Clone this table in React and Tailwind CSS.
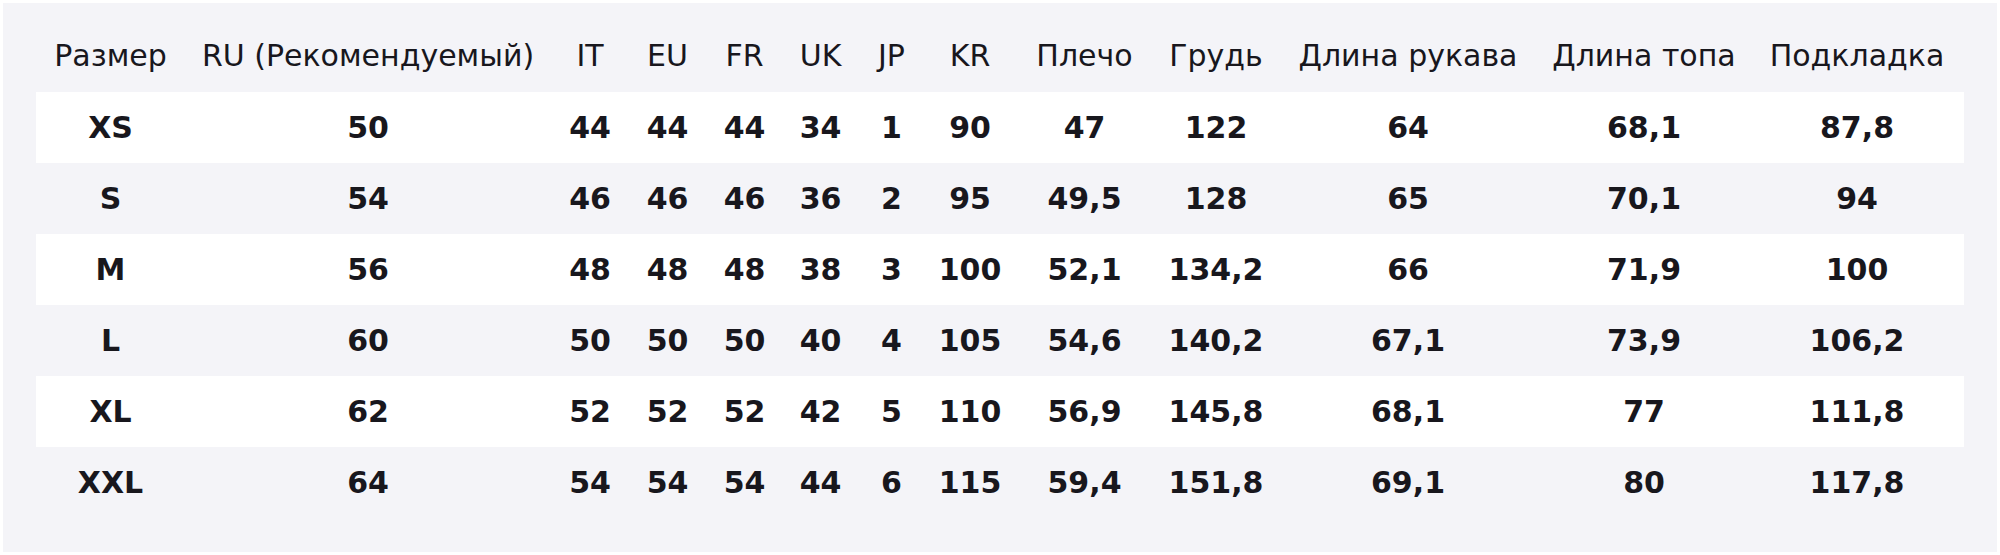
import React from 'react'

const headers = ['Размер', 'RU (Рекомендуемый)', 'IT', 'EU', 'FR', 'UK', 'JP', 'KR', 'Плечо', 'Грудь', 'Длина рукава', 'Длина топа', 'Подкладка']

const widths = ['w-[149px]', 'w-[366px]', 'w-[78px]', 'w-[77px]', 'w-[77px]', 'w-[75px]', 'w-[67px]', 'w-[90px]', 'w-[139px]', 'w-[124px]', 'w-[260px]', 'w-[212px]', 'w-[214px]']

const rows = [
    ['XS', '50', '44', '44', '44', '34', '1', '90', '47', '122', '64', '68,1', '87,8'],
    ['S', '54', '46', '46', '46', '36', '2', '95', '49,5', '128', '65', '70,1', '94'],
    ['M', '56', '48', '48', '48', '38', '3', '100', '52,1', '134,2', '66', '71,9', '100'],
    ['L', '60', '50', '50', '50', '40', '4', '105', '54,6', '140,2', '67,1', '73,9', '106,2'],
    ['XL', '62', '52', '52', '52', '42', '5', '110', '56,9', '145,8', '68,1', '77', '111,8'],
    ['XXL', '64', '54', '54', '54', '44', '6', '115', '59,4', '151,8', '69,1', '80', '117,8'],
]

const App = () => {
    return (
        <div className="bg-white p-[3px] h-[555px] w-[2000px] font-['DejaVu_Sans',sans-serif] text-[#18171d]">
            <div className="bg-[#f4f4f8] h-full px-[33px] pt-[15px] pb-[34px]">
                <table className="table-fixed w-[1928px] border-collapse">
                    <colgroup>
                        {widths.map((w, i) => <col key={i} className={w} />)}
                    </colgroup>
                    <thead>
                        <tr>
                            {headers.map((h) => (
                                <th key={h} className="h-[74px] pt-[2px] p-0 text-center align-middle font-normal text-[30px] leading-none whitespace-nowrap">{h}</th>
                            ))}
                        </tr>
                    </thead>
                    <tbody>
                        {rows.map((r, i) => (
                            <tr key={r[0]} className={i % 2 === 0 ? 'bg-white' : ''}>
                                {r.map((c, j) => (
                                    <td key={j} className="h-[71px] p-0 text-center align-middle font-bold text-[30px] leading-none whitespace-nowrap">{c}</td>
                                ))}
                            </tr>
                        ))}
                    </tbody>
                </table>
            </div>
        </div>
    )
}

export default App
